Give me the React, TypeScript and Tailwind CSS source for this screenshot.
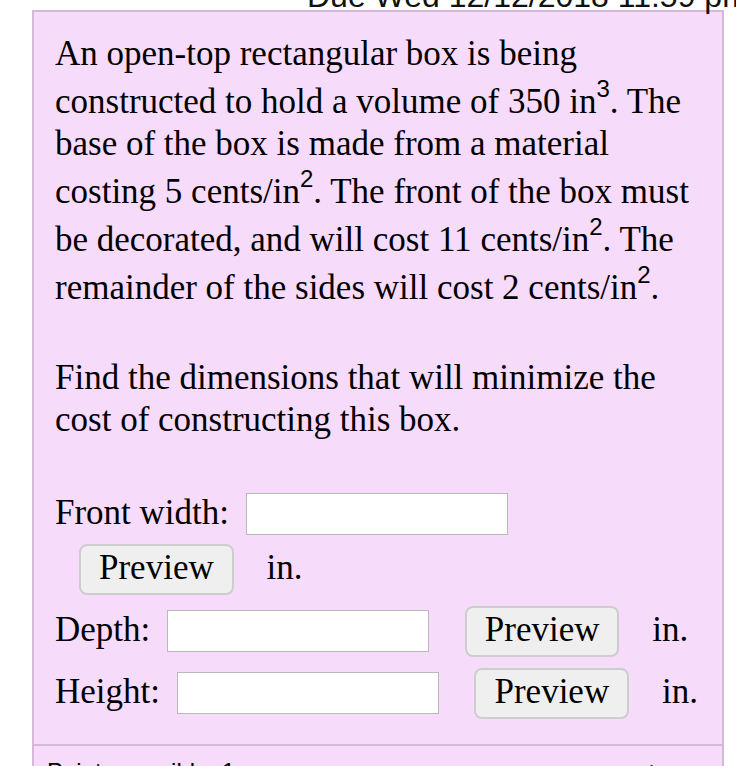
import type { ReactNode } from "react";

function Sup({ children }: { children: ReactNode }) {
  return (
    <span className="align-[16px] font-['Liberation_Sans',Arial,sans-serif] text-[24px] leading-[normal]">
      {children}
    </span>
  );
}

function AnswerInput({ label }: { label: string }) {
  return (
    <input
      type="text"
      aria-label={label}
      className="mb-[4px] ml-[8px] mr-[3px] h-[42px] w-[262px] border border-[#b9b9b9] bg-white px-2 align-middle text-[24px] outline-none"
    />
  );
}

function PreviewButton() {
  return (
    <button
      type="button"
      className="mx-[24px] mb-[6px] mt-[5px] rounded-[8px] border-2 border-[#cdcdcd] bg-[#efefef] px-[18px] pb-[5px] pt-[2px] text-[35px] leading-[normal] text-black"
    >
      Preview
    </button>
  );
}

export default function App() {
  return (
    <div className="min-h-screen w-full overflow-hidden bg-white text-black">
      <p className="-mt-[20px] h-[30px] whitespace-nowrap pl-[307px] font-['Liberation_Sans',Arial,sans-serif] text-[32px] leading-[32px] text-[#111]">
        Due Wed 12/12/2018 11:59 pm
      </p>

      <div className="ml-[32px] mr-[12px] border-2 border-[#d8b8da] bg-[#f7dbfb] font-['Liberation_Serif','Times_New_Roman',serif] text-[35px] leading-[42px]">
        <div className="pb-[19px] pl-[21px] pr-[20px] pt-[21px]">
          <p>
            An open-top rectangular box is being constructed to hold a volume of 350{" "}
            <span className="whitespace-nowrap">
              in<Sup>3</Sup>.
            </span>{" "}
            The base of the box is made from a material costing 5{" "}
            <span className="whitespace-nowrap">
              cents/in<Sup>2</Sup>.
            </span>{" "}
            The front of the box must be decorated, and will cost 11{" "}
            <span className="whitespace-nowrap">
              cents/in<Sup>2</Sup>.
            </span>{" "}
            The remainder of the sides will cost 2{" "}
            <span className="whitespace-nowrap">
              cents/in<Sup>2</Sup>.
            </span>
          </p>

          <p className="mt-[48px]">
            Find the dimensions that will minimize the cost of constructing this box.
          </p>

          <div className="mt-[51px]">
            Front width:{" "}
            <AnswerInput label="Front width" /> <PreviewButton /> in.
            <br />
            Depth: <AnswerInput label="Depth" /> <PreviewButton /> in.
            <br />
            Height: <AnswerInput label="Height" /> <PreviewButton /> in.
          </div>
        </div>

        <div className="flex items-baseline justify-between border-t-2 border-[#d8b8da] pb-4 pl-[13px] pr-[15px] pt-[12px] font-['Liberation_Sans',Arial,sans-serif] leading-[normal]">
          <span className="text-[24px]">Points possible: 1</span>
          <a href="#" className="text-[20px] text-[#0000ee]">
            License
          </a>
        </div>
      </div>
    </div>
  );
}
